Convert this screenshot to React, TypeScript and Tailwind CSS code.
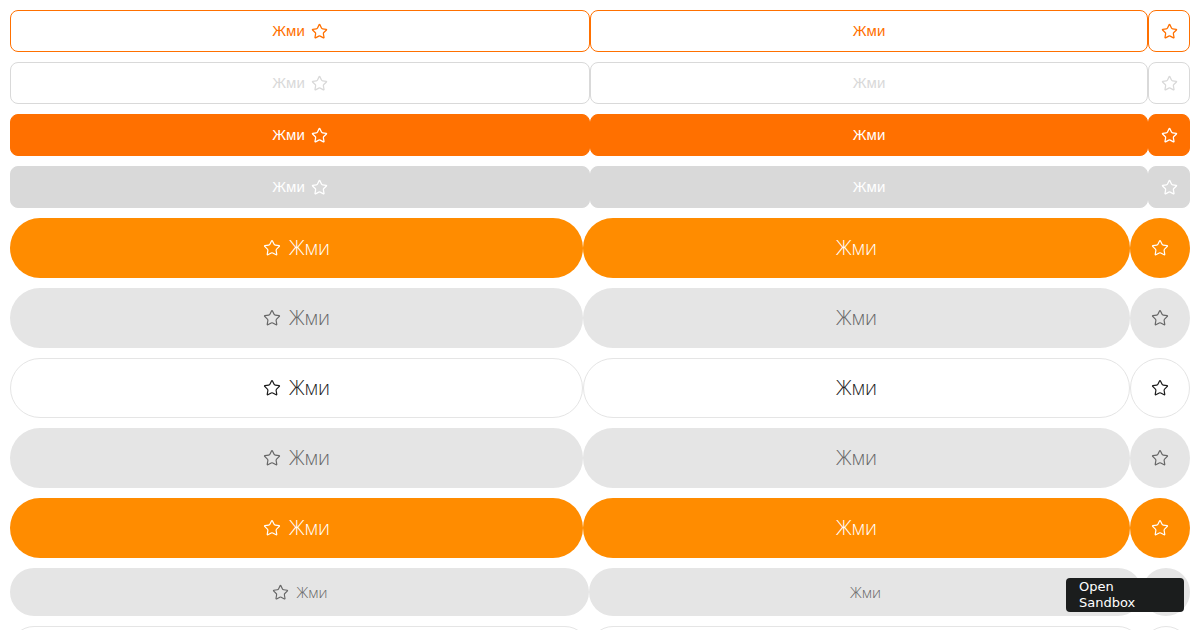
import { Star } from 'lucide-react'

const small = [
  {
    box: 'border border-[#ff7000] bg-white text-[#ff7000]',
  },
  {
    box: 'border border-[#d9d9d9] bg-white text-[#d9d9d9]',
  },
  {
    box: 'border border-[#ff7000] bg-[#ff7000] text-white',
  },
  {
    box: 'border border-[#d9d9d9] bg-[#d9d9d9] text-white',
  },
]

const large = [
  { box: 'bg-[#ff8c00] text-white' },
  { box: 'bg-[#e5e5e5] text-[#666666]' },
  { box: 'border border-[#e5e5e5] bg-white text-[#1a1a1a]' },
  { box: 'bg-[#e5e5e5] text-[#666666]' },
  { box: 'bg-[#ff8c00] text-white' },
]

function SmallRow({ box }: { box: string }) {
  return (
    <div className="flex h-[42px] font-['Liberation_Sans',Arial,sans-serif] text-[15px]">
      <button className={`flex w-[580px] items-center justify-center gap-[6px] rounded-[8px] ${box}`}>
        <span>Жми</span>
        <Star className="h-[17px] w-[17px]" strokeWidth={1.8} />
      </button>
      <button className={`flex w-[558px] items-center justify-center rounded-[8px] ${box}`}>
        <span>Жми</span>
      </button>
      <button className={`flex w-[42px] items-center justify-center rounded-[8px] ${box}`}>
        <Star className="h-[17px] w-[17px]" strokeWidth={1.8} />
      </button>
    </div>
  )
}

function LargeRow({ box }: { box: string }) {
  return (
    <div className="flex h-[60px] font-['Open_Sans',sans-serif] text-[20px] font-light">
      <button className={`flex w-[573px] items-center justify-center gap-[8px] rounded-full ${box}`}>
        <Star className="h-[18px] w-[18px]" strokeWidth={1.6} />
        <span>Жми</span>
      </button>
      <button className={`flex w-[547px] items-center justify-center rounded-full ${box}`}>
        <span>Жми</span>
      </button>
      <button className={`flex w-[60px] items-center justify-center rounded-full ${box}`}>
        <Star className="h-[18px] w-[18px]" strokeWidth={1.6} />
      </button>
    </div>
  )
}

function MediumRow({ box, label = true }: { box: string; label?: boolean }) {
  return (
    <div className="flex h-[48px] font-['Open_Sans',sans-serif] text-[15px] font-light">
      <button className={`flex w-[579px] items-center justify-center gap-[8px] rounded-full ${box}`}>
        <Star className="h-[17px] w-[17px]" strokeWidth={1.6} />
        {label && <span>Жми</span>}
      </button>
      <button className={`flex w-[553px] items-center justify-center rounded-full ${box}`}>
        {label && <span>Жми</span>}
      </button>
      <button className={`flex w-[48px] items-center justify-center rounded-full ${box}`}>
        <Star className="h-[17px] w-[17px]" strokeWidth={1.6} />
      </button>
    </div>
  )
}

export default function App() {
  return (
    <div className="relative h-[630px] w-[1200px] overflow-hidden bg-white">
      <div className="flex flex-col gap-[10px] p-[10px]">
        {small.map((row, i) => (
          <SmallRow key={i} box={row.box} />
        ))}
        {large.map((row, i) => (
          <LargeRow key={i} box={row.box} />
        ))}
        <MediumRow box="bg-[#e5e5e5] text-[#666666]" />
        <MediumRow box="border border-[#e5e5e5] bg-white text-[#1a1a1a]" label={false} />
      </div>

      <div className="absolute left-[1066px] top-[578px] w-[118px] rounded-[4px] bg-[#1b1d1d] px-[13px] py-[1px] font-['DejaVu_Sans',sans-serif] text-[13px] leading-[16px] text-white">
        Open
        <br />
        Sandbox
      </div>
    </div>
  )
}
